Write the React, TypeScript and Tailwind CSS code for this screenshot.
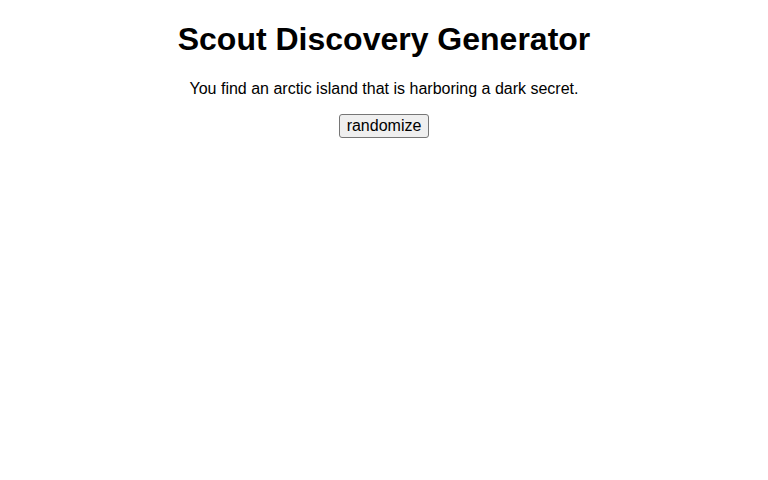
import React, { useState } from "react";

const places = ["an arctic island", "a sunken temple", "a derelict station", "a jungle moon"];
const secrets = ["a dark secret", "an ancient relic", "a lost colony", "a strange signal"];

const App = () => {
  const [text, setText] = useState("You find an arctic island that is harboring a dark secret.");

  const randomize = () => {
    const place = places[Math.floor(Math.random() * places.length)];
    const secret = secrets[Math.floor(Math.random() * secrets.length)];
    setText(`You find ${place} that is harboring ${secret}.`);
  };

  return (
    <div className="min-h-screen bg-white text-center text-black font-['Liberation_Sans',Arial,sans-serif]">
      <h1 className="text-[32px] leading-[1.15] font-bold pt-[21.44px] mb-[21.44px]">
        Scout Discovery Generator
      </h1>
      <p className="text-base leading-[1.15] mb-4">{text}</p>
      <button
        onClick={randomize}
        className="h-6 px-[7px] text-base leading-[1.15] bg-[#efefef] border border-[#767676] rounded-[3px] hover:bg-[#e5e5e5]"
      >
        randomize
      </button>
    </div>
  );
};

export default App;
